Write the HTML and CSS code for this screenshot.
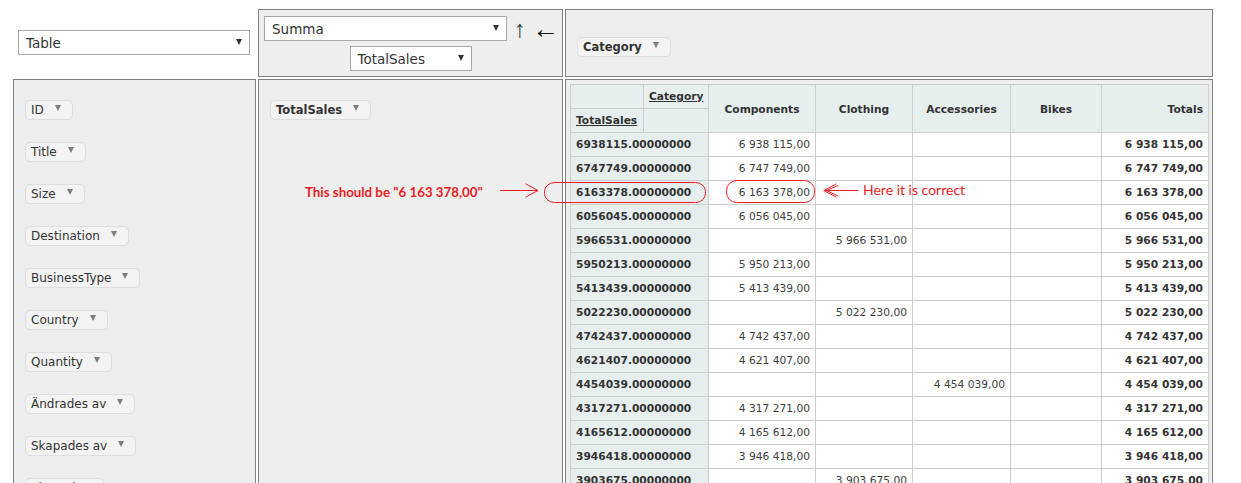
FILE: index.html
```html
<!DOCTYPE html>
<html lang="sv">
<head>
<meta charset="utf-8">
<title>Pivot</title>
<link rel="stylesheet" href="styles.css">
</head>
<body>
<div class="pvt">
  <div class="cell renderer">
    <div class="sel sel-table"><span>Table</span><i class="caret"></i></div>
  </div>
  <div class="cell box agg">
    <div class="agg-top">
      <div class="sel sel-summa"><span>Summa</span><i class="caret"></i></div>
      <span class="order up">↑</span><span class="order left">←</span>
    </div>
    <div class="agg-bottom">
      <div class="sel sel-val"><span>TotalSales</span><i class="caret"></i></div>
    </div>
  </div>
  <div class="cell box cols">
    <span class="attr strong">Category<i class="tri"></i></span>
  </div>
  <div class="cell box unused">
    <ul class="attrs">
      <li><span class="attr">ID<i class="tri"></i></span></li>
      <li><span class="attr">Title<i class="tri"></i></span></li>
      <li><span class="attr">Size<i class="tri"></i></span></li>
      <li><span class="attr">Destination<i class="tri"></i></span></li>
      <li><span class="attr">BusinessType<i class="tri"></i></span></li>
      <li><span class="attr">Country<i class="tri"></i></span></li>
      <li><span class="attr">Quantity<i class="tri"></i></span></li>
      <li><span class="attr">Ändrades av<i class="tri"></i></span></li>
      <li><span class="attr">Skapades av<i class="tri"></i></span></li>
      <li><span class="attr">Skapad<i class="tri"></i></span></li>
    </ul>
  </div>
  <div class="cell box rows">
    <ul class="attrs">
      <li><span class="attr strong">TotalSales<i class="tri"></i></span></li>
    </ul>
  </div>
  <div class="cell box output">
    <table class="pvtTable">
      <colgroup>
        <col class="c-a"><col class="c-b"><col class="c-comp"><col class="c-cloth"><col class="c-acc"><col class="c-bike"><col class="c-tot">
      </colgroup>
      <thead>
        <tr>
          <th></th>
          <th class="axis">Category</th>
          <th class="hdr" rowspan="2">Components</th>
          <th class="hdr" rowspan="2">Clothing</th>
          <th class="hdr" rowspan="2">Accessories</th>
          <th class="hdr" rowspan="2">Bikes</th>
          <th class="hdr tot-hdr" rowspan="2">Totals</th>
        </tr>
        <tr>
          <th class="axis left">TotalSales</th>
          <th></th>
        </tr>
      </thead>
      <tbody>
        <tr><th colspan="2" class="rowhdr">6938115.00000000</th><td>6&nbsp;938&nbsp;115,00</td><td></td><td></td><td></td><td class="tot">6&nbsp;938&nbsp;115,00</td></tr>
        <tr><th colspan="2" class="rowhdr">6747749.00000000</th><td>6&nbsp;747&nbsp;749,00</td><td></td><td></td><td></td><td class="tot">6&nbsp;747&nbsp;749,00</td></tr>
        <tr><th colspan="2" class="rowhdr">6163378.00000000</th><td>6&nbsp;163&nbsp;378,00</td><td></td><td></td><td></td><td class="tot">6&nbsp;163&nbsp;378,00</td></tr>
        <tr><th colspan="2" class="rowhdr">6056045.00000000</th><td>6&nbsp;056&nbsp;045,00</td><td></td><td></td><td></td><td class="tot">6&nbsp;056&nbsp;045,00</td></tr>
        <tr><th colspan="2" class="rowhdr">5966531.00000000</th><td></td><td>5&nbsp;966&nbsp;531,00</td><td></td><td></td><td class="tot">5&nbsp;966&nbsp;531,00</td></tr>
        <tr><th colspan="2" class="rowhdr">5950213.00000000</th><td>5&nbsp;950&nbsp;213,00</td><td></td><td></td><td></td><td class="tot">5&nbsp;950&nbsp;213,00</td></tr>
        <tr><th colspan="2" class="rowhdr">5413439.00000000</th><td>5&nbsp;413&nbsp;439,00</td><td></td><td></td><td></td><td class="tot">5&nbsp;413&nbsp;439,00</td></tr>
        <tr><th colspan="2" class="rowhdr">5022230.00000000</th><td></td><td>5&nbsp;022&nbsp;230,00</td><td></td><td></td><td class="tot">5&nbsp;022&nbsp;230,00</td></tr>
        <tr><th colspan="2" class="rowhdr">4742437.00000000</th><td>4&nbsp;742&nbsp;437,00</td><td></td><td></td><td></td><td class="tot">4&nbsp;742&nbsp;437,00</td></tr>
        <tr><th colspan="2" class="rowhdr">4621407.00000000</th><td>4&nbsp;621&nbsp;407,00</td><td></td><td></td><td></td><td class="tot">4&nbsp;621&nbsp;407,00</td></tr>
        <tr><th colspan="2" class="rowhdr">4454039.00000000</th><td></td><td></td><td>4&nbsp;454&nbsp;039,00</td><td></td><td class="tot">4&nbsp;454&nbsp;039,00</td></tr>
        <tr><th colspan="2" class="rowhdr">4317271.00000000</th><td>4&nbsp;317&nbsp;271,00</td><td></td><td></td><td></td><td class="tot">4&nbsp;317&nbsp;271,00</td></tr>
        <tr><th colspan="2" class="rowhdr">4165612.00000000</th><td>4&nbsp;165&nbsp;612,00</td><td></td><td></td><td></td><td class="tot">4&nbsp;165&nbsp;612,00</td></tr>
        <tr><th colspan="2" class="rowhdr">3946418.00000000</th><td>3&nbsp;946&nbsp;418,00</td><td></td><td></td><td></td><td class="tot">3&nbsp;946&nbsp;418,00</td></tr>
        <tr><th colspan="2" class="rowhdr">3903675.00000000</th><td></td><td>3&nbsp;903&nbsp;675,00</td><td></td><td></td><td class="tot">3&nbsp;903&nbsp;675,00</td></tr>
        <tr><th colspan="2" class="rowhdr">3850146.00000000</th><td>3&nbsp;850&nbsp;146,00</td><td></td><td></td><td></td><td class="tot">3&nbsp;850&nbsp;146,00</td></tr>
      </tbody>
    </table>
  </div>
</div>

<div class="notes">
  <svg class="marks" width="1241" height="483" viewBox="0 0 1241 483" xmlns="http://www.w3.org/2000/svg">
    <g fill="none" stroke="#ed1c24" stroke-width="1" stroke-linecap="round" stroke-linejoin="round">
      <path d="M500.5 190.5 H537.5"/>
      <path d="M526 184 L538 190.5 L526 197"/>
      <rect x="544.5" y="182.5" width="161" height="20" rx="10" ry="9"/>
      <rect x="726.5" y="180.5" width="88" height="22" rx="10" ry="10"/>
      <path d="M824 190.5 H858"/>
      <path d="M836 184 L824 190.5 L836 197"/>
      <path d="M838 185.5 L826.5 190.5 L838 196"/>
    </g>
  </svg>
  <span class="note note-left">This should be "6 163 378,00"</span>
  <span class="note note-right">Here it is correct</span>
</div>
</body>
</html>
```

FILE: styles.css
```css
html, body {
  margin: 0;
  padding: 0;
  overflow: hidden;
  background: #ffffff;
}

body {
  position: relative;
  width: 1241px;
  height: 483px;
  font-family: "DejaVu Sans", Verdana, sans-serif;
  color: #333333;
}

.pvt {
  display: grid;
  grid-template-columns: 243px 305px 648px;
  grid-template-rows: 68px auto;
  gap: 2px;
  margin: 9px 0 0 13px;
}

.cell {
  box-sizing: border-box;
}

.box {
  border: 1px solid #808080;
  background: #eeeeee;
}

/* select-like controls */
.sel {
  display: flex;
  align-items: center;
  justify-content: space-between;
  box-sizing: border-box;
  height: 25px;
  border: 1px solid #a9a9a9;
  background: #ffffff;
  color: #333333;
  font-size: 13.5px;
  padding: 0 7px 0 7px;
  white-space: nowrap;
}

.caret {
  display: inline-block;
  width: 0;
  height: 0;
  border-left: 3px solid transparent;
  border-right: 3px solid transparent;
  border-top: 6px solid #333333;
  margin-top: -1px;
}

.renderer {
  padding: 21px 0 0 5px;
}

.sel-table {
  width: 232px;
}

.agg {
  padding: 6px 0 0 5px;
}

.agg-top {
  display: flex;
  align-items: center;
}

.sel-summa {
  width: 243px;
}

.order {
  font-family: "Liberation Sans", Arial, sans-serif;
  font-size: 24px;
  line-height: 24px;
}

.order.up {
  color: #203c3a;
  margin-left: 7px;
}

.order.left {
  color: #111111;
  font-size: 27px;
  margin-left: 6px;
}

.agg-bottom {
  display: flex;
  justify-content: center;
  margin-top: 5px;
  padding-right: 5px;
}

.sel-val {
  width: 122px;
}

.cols {
  padding: 26px 0 0 11px;
}

.unused, .rows {
  min-height: 460px;
}

.attrs {
  list-style: none;
  margin: 0;
  padding: 20px 0 0 11px;
  display: flex;
  flex-direction: column;
  align-items: flex-start;
  gap: 22px;
}

.attrs li {
  display: flex;
  height: 20px;
}

.attr {
  display: inline-flex;
  align-items: flex-start;
  box-sizing: border-box;
  height: 20px;
  border: 1px solid #dedede;
  border-radius: 5px;
  background: #f3f3f3;
  padding: 0 11px 0 5px;
  font-size: 12px;
  line-height: 18px;
  color: #333333;
  white-space: nowrap;
}

.attr.strong {
  font-weight: bold;
  font-size: 11.5px;
}

.tri {
  display: inline-block;
  width: 0;
  height: 0;
  border-left: 3.5px solid transparent;
  border-right: 3.5px solid transparent;
  border-top: 6px solid #7d7d7d;
  margin: 4px 0 0 11px;
}

/* output table */
.output {
  padding: 4px 0 0 4px;
}

.pvtTable {
  border-collapse: collapse;
  table-layout: fixed;
  width: 638px;
  font-size: 10.67px;
  color: #333333;
}

.c-a { width: 73px; }
.c-b { width: 65px; }
.c-comp { width: 107px; }
.c-cloth { width: 97px; }
.c-acc { width: 98px; }
.c-bike { width: 91px; }
.c-tot { width: 107px; }

.pvtTable th,
.pvtTable td {
  border: 1px solid #cdcdcd;
  padding: 5px;
  line-height: 13px;
  white-space: nowrap;
  overflow: hidden;
}

.pvtTable th {
  background: #e6eeee;
  font-weight: bold;
}

.pvtTable th.axis {
  text-decoration: underline;
  text-align: right;
}

.pvtTable th.axis.left {
  text-align: left;
}

.pvtTable th.hdr {
  text-align: center;
  padding-top: 6px;
  padding-bottom: 4px;
}

.pvtTable th.tot-hdr {
  text-align: right;
}

.pvtTable th.rowhdr {
  text-align: left;
}

.pvtTable td {
  background: #ffffff;
  text-align: right;
  color: #3d3d3d;
  font-size: 10.67px;
}

.pvtTable td.tot {
  font-weight: bold;
  color: #333333;
}

/* annotations drawn over the screenshot */
.notes {
  position: absolute;
  left: 0;
  top: 0;
  width: 1241px;
  height: 483px;
  pointer-events: none;
}

.marks {
  position: absolute;
  left: 0;
  top: 0;
}

.note {
  position: absolute;
  font-family: Lato, "Open Sans", sans-serif;
  color: #ed1c24;
  line-height: 18px;
  white-space: nowrap;
}

.note-left {
  left: 305px;
  top: 183px;
  font-size: 13.3px;
  font-weight: bold;
}

.note-right {
  left: 863px;
  top: 181px;
  font-size: 14px;
}
```
